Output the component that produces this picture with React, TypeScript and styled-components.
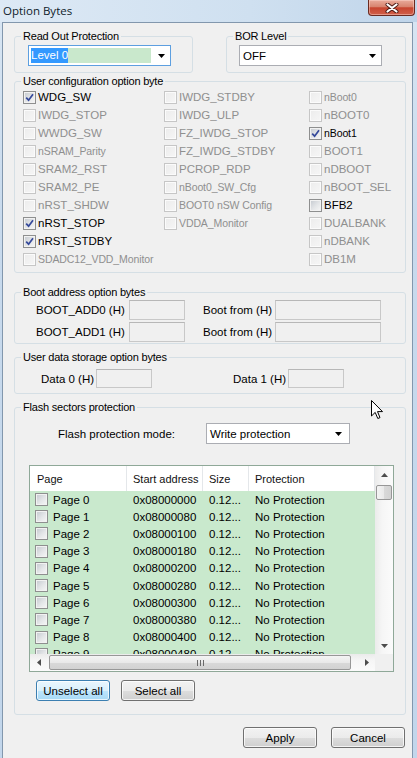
import React from 'react';
import styled, { createGlobalStyle } from 'styled-components';

const GlobalStyle = createGlobalStyle`
  html, body {
    margin: 0;
    padding: 0;
  }
  body {
    width: 417px;
    height: 758px;
    overflow: hidden;
    font-family: "Liberation Sans", Arial, sans-serif;
    font-size: 11px;
    color: #000;
  }
`;

const Window = styled.div`
  position: relative;
  width: 417px;
  height: 758px;
  display: flex;
  flex-direction: column;
  overflow: hidden;
  background: linear-gradient(180deg, #d9e6f3 0%, #c8daed 30%, #c2d6eb 100%);
`;

const TitleBar = styled.div`
  height: 22px;
  display: flex;
  align-items: flex-start;
  justify-content: space-between;
  background: linear-gradient(90deg, #dde9f5 0%, #cfe0f0 60%, #c0d5ea 100%);
`;

const Title = styled.span`
  font-family: "Open Sans", "Noto Sans", sans-serif;
  font-size: 11.5px;
  line-height: 16px;
  padding: 3px 0 0 3px;
  color: #0f1c2b;
`;

const CloseButton = styled.div`
  width: 47px;
  height: 16px;
  margin-right: 2px;
  box-sizing: border-box;
  border: 1px solid #6a2a20;
  border-top: none;
  border-radius: 0 0 4px 4px;
  background: linear-gradient(180deg, #e9ab9b 0%, #d8846f 45%, #c7452f 52%, #d0604a 100%);
  box-shadow: inset 0 0 0 1px rgba(255, 220, 210, 0.45);
  display: flex;
  align-items: center;
  justify-content: center;
`;

const Client = styled.div`
  flex: 1;
  margin: 0 4px 0 2px;
  border: 1px solid #8297ad;
  border-bottom: none;
  background: #f0f0f0;
  padding: 6px 6px 0 11px;
  display: flex;
  flex-direction: column;
`;

const TopRow = styled.div`
  display: grid;
  grid-template-columns: 179px 180px;
  column-gap: 33px;
`;

const Group = styled.fieldset<{ $mt?: number }>`
  margin: ${(p) => p.$mt ?? 0}px 0 0;
  padding: 0;
  min-width: 0;
  border: 1px solid #d5dfe5;
  border-radius: 3px;
`;

const Legend = styled.legend`
  margin-left: 6px;
  padding: 0 2px;
  line-height: 14px;
  font-size: 11px;
  letter-spacing: -0.2px;
`;

const ComboBody = styled.div<{ $pl: number }>`
  padding: 2px 0 6px ${(p) => p.$pl}px;
`;

const Combo = styled.div<{ $w: number; $focus?: boolean }>`
  width: ${(p) => p.$w}px;
  height: 21px;
  box-sizing: border-box;
  border: 1px solid ${(p) => (p.$focus ? '#5d9fe0' : '#abadb3')};
  background: #fff;
  display: flex;
  align-items: center;
  padding-left: 2px;
`;

const ComboText = styled.span`
  flex: 1;
  padding-left: 1px;
  font-size: 11.5px;
  white-space: nowrap;
`;

const Selection = styled.span`
  height: 15px;
  line-height: 15px;
  background: #3399ff;
  color: #fff;
  font-size: 11.5px;
`;

const GreenFill = styled.span`
  flex: 1;
  height: 15px;
  background: #c9e8cc;
  margin-right: 2px;
`;

const ArrowBox = styled.span<{ $w?: number }>`
  width: ${(p) => p.$w ?? 17}px;
  height: 100%;
  display: flex;
  align-items: center;
  justify-content: center;
`;

const ConfigBody = styled.div`
  display: grid;
  grid-template-columns: 141px 145px 1fr;
  padding: 0 0 4px 8px;
`;

const OptionColumn = styled.div`
  display: flex;
  flex-direction: column;
`;

const OptionItem = styled.div`
  height: 18px;
  display: flex;
  align-items: center;
  gap: 2px;
`;

const Box = styled.span<{ $enabled?: boolean }>`
  width: 13px;
  height: 13px;
  flex: none;
  box-sizing: border-box;
  border: 1px solid ${(p) => (p.$enabled ? '#8e8f8f' : '#c6c6c6')};
  background: ${(p) =>
    p.$enabled
      ? 'linear-gradient(135deg, #c3c8ce 0%, #e4e6e8 55%, #f7f7f7 100%)'
      : 'linear-gradient(135deg, #ececec 0%, #f6f6f6 100%)'};
  box-shadow: inset 0 0 0 1px ${(p) => (p.$enabled ? '#f2f2f2' : '#fbfbfb')};
  display: flex;
  align-items: center;
  justify-content: center;
`;

const OptionLabel = styled.span<{ $enabled?: boolean; $narrow?: boolean }>`
  font-size: ${(p) => (p.$narrow ? '10.5px' : '11.5px')};
  letter-spacing: ${(p) => (p.$narrow ? '-0.1px' : '0')};
  color: ${(p) => (p.$enabled ? '#000' : '#8f8f8f')};
  white-space: nowrap;
`;

const AddrGrid = styled.div`
  display: grid;
  grid-template-columns: 93px 74px 72px 106px;
  row-gap: 2px;
  align-items: center;
  padding: 1px 0 1px 21px;
`;

const DataGrid = styled.div`
  display: grid;
  grid-template-columns: 55px 137px 55px 56px;
  align-items: center;
  padding: 5px 0 5px 26px;
`;

const FieldLabel = styled.span`
  font-size: 11.5px;
  white-space: nowrap;
`;

const Field = styled.div<{ $w: number; $h: number }>`
  width: ${(p) => p.$w}px;
  height: ${(p) => p.$h}px;
  box-sizing: border-box;
  border: 1px solid #c8c8c8;
  border-top-color: #b7b7b7;
  background: #f0f0f0;
`;

const FlashBody = styled.div`
  padding: 9px 0 13px 14px;
`;

const ModeRow = styled.div`
  display: flex;
  align-items: center;
  padding-left: 29px;
`;

const ModeLabel = styled.span`
  width: 148px;
  font-size: 11.5px;
`;

const ListView = styled.div`
  margin-top: 21px;
  width: 365px;
  height: 207px;
  box-sizing: border-box;
  border: 1px solid #8fa898;
  display: grid;
  grid-template-columns: 345px 18px;
  grid-template-rows: 188px 17px;
  background: #f0f0f0;
`;

const ListMain = styled.div`
  overflow: hidden;
  background: #c9e9cd;
`;

const HeaderRow = styled.div`
  display: grid;
  grid-template-columns: 97px 76px 46px 1fr;
  height: 25px;
  background: #fff;
`;

const HeaderCell = styled.div<{ $pl?: number }>`
  display: flex;
  align-items: center;
  padding-left: ${(p) => p.$pl ?? 6}px;
  border-right: 1px solid #e4e7ea;
  font-size: 11px;
  color: #111;
  white-space: nowrap;
`;

const PageRow = styled.div`
  display: grid;
  grid-template-columns: 97px 76px 46px 1fr;
  height: 17.2px;
  align-items: center;
  font-size: 11.5px;
  white-space: nowrap;
`;

const PageCell = styled.div`
  display: flex;
  align-items: center;
  gap: 5px;
  padding-left: 5px;
`;

const Cell = styled.div`
  padding-left: 6px;
  overflow: hidden;
`;

const VScroll = styled.div`
  grid-row: 1;
  grid-column: 2;
  display: flex;
  flex-direction: column;
  background: linear-gradient(90deg, #ebebeb 0%, #f6f6f6 40%, #fbfbfb 100%);
`;

const HScroll = styled.div`
  grid-row: 2;
  grid-column: 1;
  display: flex;
  align-items: center;
  background: linear-gradient(180deg, #ebebeb 0%, #f6f6f6 40%, #fbfbfb 100%);
`;

const Corner = styled.div`
  grid-row: 2;
  grid-column: 2;
  background: #f0f0f0;
`;

const ScrollArrow = styled.div<{ $size: 'w' | 'h' }>`
  flex: none;
  width: ${(p) => (p.$size === 'w' ? '17px' : '100%')};
  height: ${(p) => (p.$size === 'h' ? '17px' : '100%')};
  display: flex;
  align-items: center;
  justify-content: center;
`;

const Spacer = styled.div`
  flex: 1;
`;

const VThumb = styled.div`
  margin: 2px 1px 0 1px;
  height: 15px;
  box-sizing: border-box;
  border: 1px solid #979797;
  border-radius: 2px;
  background: linear-gradient(90deg, #f4f4f4 0%, #e9e9e9 50%, #d9d9d9 51%, #d2d2d2 100%);
`;

const HThumb = styled.div`
  margin-left: 2px;
  width: 302px;
  height: 15px;
  box-sizing: border-box;
  border: 1px solid #979797;
  border-radius: 2px;
  background: linear-gradient(180deg, #f4f4f4 0%, #e9e9e9 50%, #d9d9d9 51%, #d2d2d2 100%);
  display: flex;
  align-items: center;
  justify-content: center;
`;

const ButtonRow = styled.div`
  display: flex;
  gap: 11px;
  margin: 8px 0 0 7px;
`;

const Button = styled.button<{ $focus?: boolean }>`
  width: 74px;
  height: 21px;
  padding: 0;
  box-sizing: border-box;
  border: 1px solid ${(p) => (p.$focus ? '#3c7fb1' : '#707070')};
  border-radius: 3px;
  background: ${(p) =>
    p.$focus
      ? 'linear-gradient(180deg, #eaf6fd 0%, #d9f0fc 50%, #bee6fd 51%, #a7d9f5 100%)'
      : 'linear-gradient(180deg, #f2f2f2 0%, #ebebeb 50%, #dddddd 51%, #cfcfcf 100%)'};
  box-shadow: inset 0 0 0 1px rgba(255, 255, 255, 0.75);
  font-family: "Liberation Sans", Arial, sans-serif;
  font-size: 11.5px;
  color: #000;
`;

const Footer = styled.div`
  display: flex;
  justify-content: flex-end;
  gap: 14px;
  margin-top: 12px;
  padding-right: 1px;
`;

const Cursor = styled.svg`
  position: absolute;
  left: 371px;
  top: 400px;
`;

type Opt = { label: string; checked?: boolean; enabled?: boolean; narrow?: boolean };

const optionColumns: Opt[][] = [
  [
    { label: 'WDG_SW', checked: true, enabled: true },
    { label: 'IWDG_STOP' },
    { label: 'WWDG_SW' },
    { label: 'nSRAM_Parity', narrow: true },
    { label: 'SRAM2_RST' },
    { label: 'SRAM2_PE' },
    { label: 'nRST_SHDW' },
    { label: 'nRST_STOP', checked: true, enabled: true },
    { label: 'nRST_STDBY', checked: true, enabled: true },
    { label: 'SDADC12_VDD_Monitor', narrow: true },
  ],
  [
    { label: 'IWDG_STDBY' },
    { label: 'IWDG_ULP' },
    { label: 'FZ_IWDG_STOP' },
    { label: 'FZ_IWDG_STDBY' },
    { label: 'PCROP_RDP' },
    { label: 'nBoot0_SW_Cfg', narrow: true },
    { label: 'BOOT0 nSW Config', narrow: true },
    { label: 'VDDA_Monitor', narrow: true },
  ],
  [
    { label: 'nBoot0', narrow: true },
    { label: 'nBOOT0' },
    { label: 'nBoot1', checked: true, enabled: true, narrow: true },
    { label: 'BOOT1' },
    { label: 'nDBOOT' },
    { label: 'nBOOT_SEL' },
    { label: 'BFB2', enabled: true },
    { label: 'DUALBANK' },
    { label: 'nDBANK' },
    { label: 'DB1M' },
  ],
];

const pages = Array.from({ length: 10 }, (_, i) => ({
  name: `Page ${i}`,
  address: '0x' + (0x08000000 + i * 0x80).toString(16).toUpperCase().padStart(8, '0'),
}));

function DownArrow({ w = 7 }: { w?: number }) {
  return (
    <svg width={w} height="4" viewBox={`0 0 ${w} 4`}>
      <path d={`M0 0 H${w} L${w / 2} 4 Z`} fill="#000" />
    </svg>
  );
}

function Tri({ dir }: { dir: 'up' | 'down' | 'left' | 'right' }) {
  const d = {
    up: 'M0 4 L3.5 0 L7 4 Z',
    down: 'M0 0 L7 0 L3.5 4 Z',
    left: 'M4 0 L4 7 L0 3.5 Z',
    right: 'M0 0 L4 3.5 L0 7 Z',
  }[dir];
  const vertical = dir === 'up' || dir === 'down';
  return (
    <svg width={vertical ? 7 : 4} height={vertical ? 4 : 7} viewBox={vertical ? '0 0 7 4' : '0 0 4 7'}>
      <path d={d} fill="#4d4d4d" />
    </svg>
  );
}

function CheckMark() {
  return (
    <svg width="9" height="9" viewBox="0 0 9 9">
      <path d="M1.2 4.6 L3.6 7.2 L8 1.2" fill="none" stroke="#34489a" strokeWidth="1.7" />
    </svg>
  );
}

function CheckBox({ checked, enabled }: { checked?: boolean; enabled?: boolean }) {
  return <Box $enabled={enabled}>{checked && <CheckMark />}</Box>;
}

export default function App() {
  return (
    <>
      <GlobalStyle />
      <Window>
        <TitleBar>
          <Title>Option Bytes</Title>
          <CloseButton>
            <svg width="14" height="10" viewBox="0 0 14 10">
              <path d="M2.5 1.5 L11.5 8.5 M11.5 1.5 L2.5 8.5" stroke="#4a1a14" strokeWidth="4" strokeLinecap="round" />
              <path d="M2.5 1.5 L11.5 8.5 M11.5 1.5 L2.5 8.5" stroke="#fff" strokeWidth="2.2" strokeLinecap="round" />
            </svg>
          </CloseButton>
        </TitleBar>

        <Client>
          <TopRow>
            <Group>
              <Legend>Read Out Protection</Legend>
              <ComboBody $pl={13}>
                <Combo $w={143} $focus>
                  <Selection>Level 0</Selection>
                  <GreenFill />
                  <ArrowBox>
                    <DownArrow />
                  </ArrowBox>
                </Combo>
              </ComboBody>
            </Group>
            <Group>
              <Legend>BOR Level</Legend>
              <ComboBody $pl={12}>
                <Combo $w={143}>
                  <ComboText>OFF</ComboText>
                  <ArrowBox>
                    <DownArrow />
                  </ArrowBox>
                </Combo>
              </ComboBody>
            </Group>
          </TopRow>

          <Group $mt={1}>
            <Legend>User configuration option byte</Legend>
            <ConfigBody>
              {optionColumns.map((col, ci) => (
                <OptionColumn key={ci}>
                  {col.map((o) => (
                    <OptionItem key={o.label}>
                      <CheckBox checked={o.checked} enabled={o.enabled} />
                      <OptionLabel $enabled={o.enabled} $narrow={o.narrow}>
                        {o.label}
                      </OptionLabel>
                    </OptionItem>
                  ))}
                </OptionColumn>
              ))}
            </ConfigBody>
          </Group>

          <Group $mt={12}>
            <Legend>Boot address option bytes</Legend>
            <AddrGrid>
              <FieldLabel>BOOT_ADD0 (H)</FieldLabel>
              <Field $w={56} $h={20} />
              <FieldLabel>Boot from (H)</FieldLabel>
              <Field $w={106} $h={20} />
              <FieldLabel>BOOT_ADD1 (H)</FieldLabel>
              <Field $w={56} $h={20} />
              <FieldLabel>Boot from (H)</FieldLabel>
              <Field $w={106} $h={20} />
            </AddrGrid>
          </Group>

          <Group $mt={6}>
            <Legend>User data storage option bytes</Legend>
            <DataGrid>
              <FieldLabel>Data 0 (H)</FieldLabel>
              <Field $w={56} $h={19} />
              <FieldLabel>Data 1 (H)</FieldLabel>
              <Field $w={56} $h={19} />
            </DataGrid>
          </Group>

          <Group $mt={6}>
            <Legend>Flash sectors protection</Legend>
            <FlashBody>
              <ModeRow>
                <ModeLabel>Flash protection mode:</ModeLabel>
                <Combo $w={144}>
                  <ComboText>Write protection</ComboText>
                  <ArrowBox $w={21}>
                    <DownArrow />
                  </ArrowBox>
                </Combo>
              </ModeRow>

              <ListView>
                <ListMain>
                  <HeaderRow>
                    <HeaderCell $pl={7}>Page</HeaderCell>
                    <HeaderCell>Start address</HeaderCell>
                    <HeaderCell>Size</HeaderCell>
                    <HeaderCell>Protection</HeaderCell>
                  </HeaderRow>
                  {pages.map((p) => (
                    <PageRow key={p.name}>
                      <PageCell>
                        <CheckBox enabled />
                        <span>{p.name}</span>
                      </PageCell>
                      <Cell>{p.address}</Cell>
                      <Cell>0.12...</Cell>
                      <Cell>No Protection</Cell>
                    </PageRow>
                  ))}
                </ListMain>
                <VScroll>
                  <ScrollArrow $size="h">
                    <Tri dir="up" />
                  </ScrollArrow>
                  <VThumb />
                  <Spacer />
                  <ScrollArrow $size="h">
                    <Tri dir="down" />
                  </ScrollArrow>
                </VScroll>
                <HScroll>
                  <ScrollArrow $size="w">
                    <Tri dir="left" />
                  </ScrollArrow>
                  <HThumb>
                    <svg width="7" height="6" viewBox="0 0 7 6">
                      <path d="M0.5 0 V6 M3.5 0 V6 M6.5 0 V6" stroke="#6a6a6a" strokeWidth="1" />
                    </svg>
                  </HThumb>
                  <Spacer />
                  <ScrollArrow $size="w">
                    <Tri dir="right" />
                  </ScrollArrow>
                </HScroll>
                <Corner />
              </ListView>

              <ButtonRow>
                <Button $focus>Unselect all</Button>
                <Button>Select all</Button>
              </ButtonRow>
            </FlashBody>
          </Group>

          <Footer>
            <Button>Apply</Button>
            <Button>Cancel</Button>
          </Footer>
        </Client>

        <Cursor width="13" height="20" viewBox="0 0 13 20">
          <path d="M0.5 0.5 V16 L4.2 12.4 L6.8 18.5 L9 17.6 L6.5 11.6 H11.5 Z" fill="#fff" stroke="#000" strokeWidth="1" strokeLinejoin="round" />
        </Cursor>
      </Window>
    </>
  );
}
